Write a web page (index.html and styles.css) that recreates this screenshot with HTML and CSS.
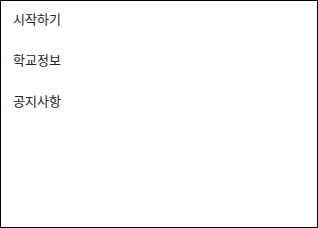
FILE: index.html
```html
<!DOCTYPE html>
<html lang="ko">
<head>
<meta charset="utf-8">
<link rel="stylesheet" href="styles.css">
</head>
<body>
<div class="frame">
  <ul class="menu">
    <li class="menu-item">시작하기</li>
    <li class="menu-item">학교정보</li>
    <li class="menu-item">공지사항</li>
  </ul>
</div>
</body>
</html>
```
FILE: styles.css
```css
html, body {
  margin: 0;
  padding: 0;
  background: #fff;
}
.frame {
  box-sizing: border-box;
  width: 318px;
  height: 228px;
  border: 1px solid #000;
  padding: 9px 12px;
}
.menu {
  list-style: none;
  margin: 0;
  padding: 0;
  display: flex;
  flex-direction: column;
  gap: 23px;
}
.menu-item {
  font-family: "Noto Sans CJK KR", "Noto Sans", sans-serif;
  font-size: 13px;
  line-height: 18px;
  color: #222;
}
```
